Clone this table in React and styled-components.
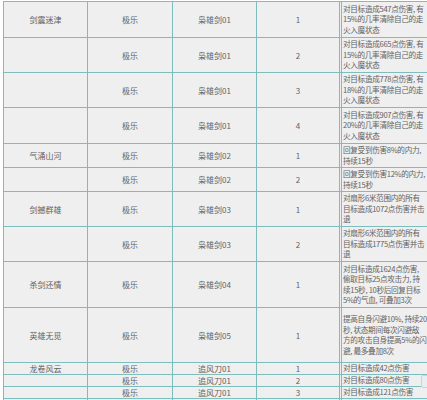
import React from "react";
import styled, { createGlobalStyle } from "styled-components";

const Global = createGlobalStyle`
  html, body { margin: 0; padding: 0; background: #ffffff; }
  body { overflow: hidden; }
`;

const Page = styled.div`
  padding: 1px 0 0 3px;
  width: 440px;
  font-family: "Noto Sans CJK SC", "Liberation Sans", sans-serif;
  font-size: 8px;
  color: #626262;
`;

const Table = styled.div`
  display: flex;
  flex-direction: column;
  border-top: 1px solid #7dbdbd;
  border-left: 1px solid #7dbdbd;
  background: #efefef;
`;

const Row = styled.div`
  display: grid;
  grid-template-columns: 84px 85px 84px 83px 92px;
  height: ${(p) => p.$h}px;
`;

const Cell = styled.div`
  box-sizing: border-box;
  border-right: 1px solid #7dbdbd;
  border-bottom: 1px solid #7dbdbd;
  display: flex;
  align-items: center;
  justify-content: center;
  white-space: nowrap;
  overflow: hidden;
`;

const DescCell = styled(Cell)`
  justify-content: flex-start;
  padding-left: 1px;
`;

const DescInner = styled.div`
  box-sizing: border-box;
  align-self: stretch;
  border-left: 1px solid #7dbdbd;
  padding-left: 1px;
  display: flex;
  flex-direction: column;
  justify-content: center;
  line-height: 10.5px;
  font-size: 7.6px;
  letter-spacing: -0.3px;
`;

const Floater = styled.div`
  position: fixed;
  left: 421px;
  top: 375px;
  width: 20px;
  height: 13px;
  box-sizing: border-box;
  background: #e9eef3;
  border: 1px solid #c9d3dc;
  border-radius: 2px;
`;

const rows = [
  { h: 36, name: "剑震迷津", w: "枭雄剑01", n: "1", d: ["对目标造成547点伤害, 有", "15%的几率清除自己的走", "火入魔状态"] },
  { h: 35, name: "", w: "枭雄剑01", n: "2", d: ["对目标造成665点伤害, 有", "15%的几率清除自己的走", "火入魔状态"] },
  { h: 35, name: "", w: "枭雄剑01", n: "3", d: ["对目标造成778点伤害, 有", "18%的几率清除自己的走", "火入魔状态"] },
  { h: 36, name: "", w: "枭雄剑01", n: "4", d: ["对目标造成907点伤害, 有", "20%的几率清除自己的走", "火入魔状态"] },
  { h: 24, name: "气涌山河", w: "枭雄剑02", n: "1", d: ["回复受到伤害8%的内力,", "持续15秒"] },
  { h: 24, name: "", w: "枭雄剑02", n: "2", d: ["回复受到伤害12%的内力,", "持续15秒"] },
  { h: 35, name: "剑撼群雄", w: "枭雄剑03", n: "1", d: ["对扇形6米范围内的所有", "目标造成1072点伤害并击", "退"] },
  { h: 35, name: "", w: "枭雄剑03", n: "2", d: ["对扇形6米范围内的所有", "目标造成1775点伤害并击", "退"] },
  { h: 46, name: "杀剑还情", w: "枭雄剑04", n: "1", d: ["对目标造成1624点伤害,", "偷取目标25点攻击力, 持", "续15秒, 10秒后回复目标", "5%的气血, 可叠加3次"] },
  { h: 55, name: "英雄无觅", w: "枭雄剑05", n: "1", d: ["提高自身闪避10%, 持续20", "秒, 状态期间每次闪避敌", "方的攻击自身提高5%的闪", "避, 最多叠加8次"] },
  { h: 12, name: "龙卷风云", w: "追风刀01", n: "1", d: ["对目标造成42点伤害"] },
  { h: 12, name: "", w: "追风刀01", n: "2", d: ["对目标造成80点伤害"] },
  { h: 12, name: "", w: "追风刀01", n: "3", d: ["对目标造成121点伤害"] },
  { h: 12, name: "", w: "追风刀01", n: "4", d: ["对目标造成161点伤害"] },
];

export default function App() {
  return (
    <>
      <Global />
      <Page>
        <Table>
          {rows.map((r, i) => (
            <Row key={i} $h={r.h}>
              <Cell>{r.name}</Cell>
              <Cell>极乐</Cell>
              <Cell>{r.w}</Cell>
              <Cell>{r.n}</Cell>
              <DescCell>
                <DescInner>
                  {r.d.map((t, j) => (
                    <span key={j}>{t}</span>
                  ))}
                </DescInner>
              </DescCell>
            </Row>
          ))}
        </Table>
      </Page>
      <Floater />
    </>
  );
}
